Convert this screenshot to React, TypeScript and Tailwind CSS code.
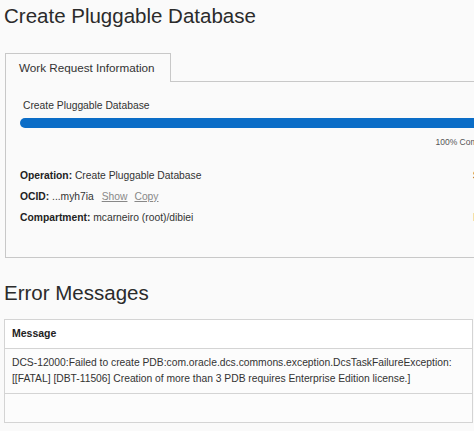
export default function App() {
  return (
    <div className="w-[474px] h-[431px] overflow-hidden bg-[#fafafa] text-[#333] font-['Liberation_Sans',Arial,sans-serif]">
      <h1 className="pl-[4px] pt-[3px] text-[20.5px] leading-[26px] text-[#2b2b2b]">Create Pluggable Database</h1>

      <div className="mt-[24px] w-[560px] pl-[5px]">
        <div className="flex">
          <div className="h-[29px] w-[166px] border border-b-0 border-[#c8c8c8] bg-[#fafafa] flex items-center pl-[13px] text-[11.7px] text-[#333] relative z-10">
            Work Request Information
          </div>
          <div className="flex-1 border-b border-[#c8c8c8]" />
        </div>
        <div className="-mt-px border border-t-0 border-[#c8c8c8] h-[177px] pl-[14px] pt-[18px]">
          <div className="pl-[3px] text-[10.3px] leading-[14px] text-[#333]">Create Pluggable Database</div>
          <div className="mt-[5px] h-[10px] w-[560px] rounded-full bg-[#0b6dc7]" />
          <div className="w-[476px] text-right text-[8.5px] leading-[10px] mt-[9px] text-[#555] whitespace-nowrap">100% Complete</div>
          <div className="mt-[22px] flex">
            <div className="w-[453px] flex flex-col gap-[7px] text-[10.3px] leading-[14px] whitespace-nowrap">
              <div>
                <span className="font-bold text-[#222]">Operation:</span> Create Pluggable Database
              </div>
              <div>
                <span className="font-bold text-[#222]">OCID:</span> ...myh7ia{" "}
                <span className="ml-[5px] text-[#888] underline">Show</span>
                <span className="ml-[7px] text-[#888] underline">Copy</span>
              </div>
              <div>
                <span className="font-bold text-[#222]">Compartment:</span> mcarneiro (root)/dibiei
              </div>
            </div>
            <div className="flex flex-col gap-[7px] text-[10.3px] leading-[14px] whitespace-nowrap">
              <div className="font-bold text-[#222]">Started:</div>
              <div>&nbsp;</div>
              <div className="text-[#b8865a]">Error</div>
            </div>
          </div>
        </div>
      </div>

      <h2 className="pl-[4px] mt-[22px] text-[20.5px] leading-[26px] text-[#2b2b2b]">Error Messages</h2>

      <div className="mt-[13px] ml-[4px] w-[469px] border border-[#d4d4d4] bg-white">
        <div className="h-[29px] flex items-center pl-[7px] text-[10.5px] font-bold text-[#222] border-b border-[#d4d4d4]">
          Message
        </div>
        <div className="h-[45px] flex flex-col justify-center pl-[7px] text-[10.3px] leading-[16px] text-[#333] border-b border-[#d4d4d4] bg-[#fcfcfc] whitespace-nowrap">
          <div>DCS-12000:Failed to create PDB:com.oracle.dcs.commons.exception.DcsTaskFailureException:</div>
          <div>[[FATAL] [DBT-11506] Creation of more than 3 PDB requires Enterprise Edition license.]</div>
        </div>
        <div className="h-[28px] bg-[#fcfcfc]" />
      </div>
    </div>
  );
}
